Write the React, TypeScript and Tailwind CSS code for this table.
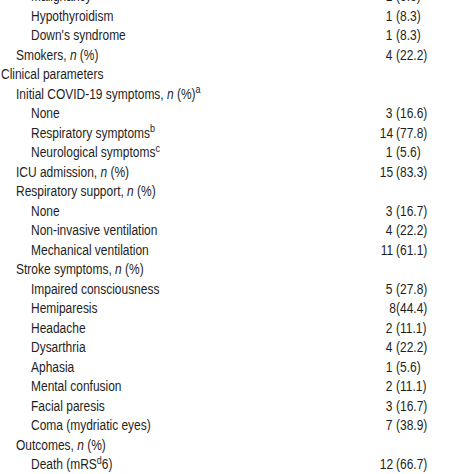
import React from "react";

type Row = {
  level: number;
  label: React.ReactNode;
  count?: string;
  pct?: string;
};

const N = () => <i>n</i>;

const rows: Row[] = [
  { level: 2, label: "Malignancy", count: "1", pct: "(5.6)" },
  { level: 2, label: "Hypothyroidism", count: "1", pct: "(8.3)" },
  { level: 2, label: "Down's syndrome", count: "1", pct: "(8.3)" },
  { level: 1, label: <>Smokers, <N /> (%)</>, count: "4", pct: "(22.2)" },
  { level: 0, label: "Clinical parameters" },
  { level: 1, label: <>Initial COVID-19 symptoms, <N /> (%)<sup>a</sup></> },
  { level: 2, label: "None", count: "3", pct: "(16.6)" },
  { level: 2, label: <>Respiratory symptoms<sup>b</sup></>, count: "14", pct: "(77.8)" },
  { level: 2, label: <>Neurological symptoms<sup>c</sup></>, count: "1", pct: "(5.6)" },
  { level: 1, label: <>ICU admission, <N /> (%)</>, count: "15", pct: "(83.3)" },
  { level: 1, label: <>Respiratory support, <N /> (%)</> },
  { level: 2, label: "None", count: "3", pct: "(16.7)" },
  { level: 2, label: "Non-invasive ventilation", count: "4", pct: "(22.2)" },
  { level: 2, label: "Mechanical ventilation", count: "11", pct: "(61.1)" },
  { level: 1, label: <>Stroke symptoms, <N /> (%)</> },
  { level: 2, label: "Impaired consciousness", count: "5", pct: "(27.8)" },
  { level: 2, label: "Hemiparesis", count: "8", pct: "(44.4)" },
  { level: 2, label: "Headache", count: "2", pct: "(11.1)" },
  { level: 2, label: "Dysarthria", count: "4", pct: "(22.2)" },
  { level: 2, label: "Aphasia", count: "1", pct: "(5.6)" },
  { level: 2, label: "Mental confusion", count: "2", pct: "(11.1)" },
  { level: 2, label: "Facial paresis", count: "3", pct: "(16.7)" },
  { level: 2, label: "Coma (mydriatic eyes)", count: "7", pct: "(38.9)" },
  { level: 1, label: <>Outcomes, <N /> (%)</> },
  { level: 2, label: <>Death (mRS<sup>d</sup>6)</>, count: "12", pct: "(66.7)" },
];

const indent = ["pl-[1px]", "pl-[16px]", "pl-[31px]"];

// the table font is a condensed grotesque; squeeze Liberation Sans to its width
export default function App() {
  return (
    <div
      className="w-[474px] h-[474px] overflow-hidden bg-white text-[#1e1e1e] text-[14px] leading-[19.52px]"
      style={{ fontFamily: '"Liberation Sans Narrow", "Liberation Sans", Arial, sans-serif' }}
    >
      <div className="mt-[-13px] flex flex-col">
        {rows.map((r, i) => (
          <div key={i} className="flex items-baseline whitespace-nowrap">
            <div className={`flex-1 ${indent[r.level]}`}>
              <span className="inline-block origin-left scale-x-[0.855]">{r.label}</span>
            </div>
            <div className="w-[40px] text-right">
              <span className="inline-block origin-right scale-x-[0.855]">
                {r.count ? (r.count === "8" ? r.count : r.count + "\u00a0") : "\u00a0"}
              </span>
            </div>
            <div className="w-[78px]">
              <span className="inline-block origin-left scale-x-[0.855]">{r.pct ?? "\u00a0"}</span>
            </div>
          </div>
        ))}
      </div>
    </div>
  );
}
